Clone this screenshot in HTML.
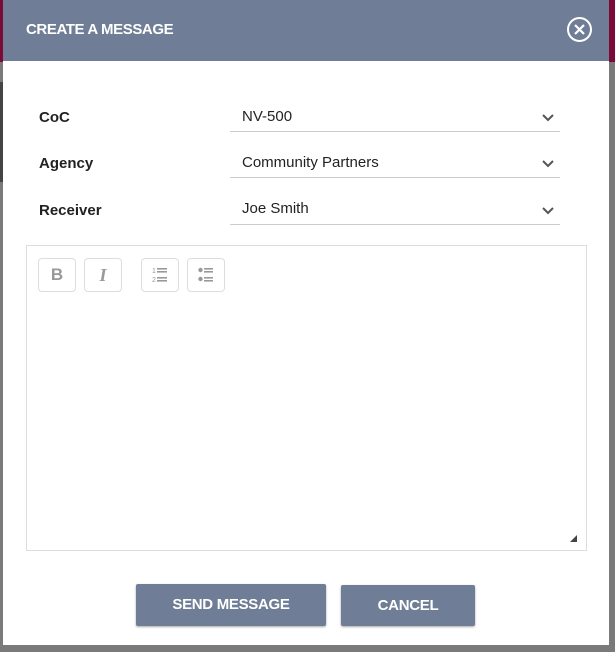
<!DOCTYPE html>
<html><head><style>
*{margin:0;padding:0;box-sizing:border-box}
body{width:615px;height:652px;background:#7a7a7a;position:relative;overflow:hidden;font-family:"Liberation Sans",Arial,sans-serif}
.a{position:absolute}
.hdr{left:0;top:0;width:615px;height:62px;background:#7b0b36}
.modal{left:3px;top:0;width:606px;height:645px;background:#fff}
.head{left:3px;top:0;width:606px;height:61px;background:#6f7e96}
.title{left:26px;top:21px;color:#fff;font-weight:bold;font-size:15px;letter-spacing:-.4px}
.lbl{left:39px;font-size:15px;font-weight:bold;color:#222}
.val{left:242px;font-size:15px;color:#222}
.line{left:230px;width:330px;height:1px;background:#ccc}
.tb{width:38px;height:34px;border:1px solid #ddd;border-radius:4px;top:258px;color:#999;text-align:center}
.btn{background:#6f7e96;color:#fff;font-weight:bold;font-size:15px;text-align:center;box-shadow:0 1px 2px rgba(0,0,0,.35);border-radius:2px;letter-spacing:-.3px}
</style></head><body>
<div class="a hdr"></div>
<div class="a" style="left:0;top:82px;width:3px;height:100px;background:#444"></div>
<div class="a modal"></div>
<div class="a head"></div>
<div class="a title">CREATE A MESSAGE</div>
<svg class="a" style="left:566px;top:16px" width="27" height="27" viewBox="0 0 27 27"><circle cx="13.5" cy="13.5" r="11.5" fill="none" stroke="#fff" stroke-width="2"/><path d="M9 9L18 18M18 9L9 18" stroke="#fff" stroke-width="2.2"/></svg>
<div class="a lbl" style="top:109px">CoC</div>
<div class="a val" style="top:108px">NV-500</div>
<div class="a line" style="top:131px"></div>
<div class="a lbl" style="top:155px">Agency</div>
<div class="a val" style="top:154px">Community Partners</div>
<div class="a line" style="top:177px"></div>
<div class="a lbl" style="top:202px">Receiver</div>
<div class="a val" style="top:200px">Joe Smith</div>
<div class="a line" style="top:224px"></div>
<svg class="a" style="left:541px;top:113px" width="14" height="110" viewBox="0 0 14 110"><g fill="none" stroke="#555" stroke-width="2"><path d="M2 2L7 7L12 2"/><path d="M2 48L7 53L12 48"/><path d="M2 95L7 100L12 95"/></g></svg>
<div class="a" style="left:26px;top:245px;width:561px;height:306px;border:1px solid #ddd"></div>
<div class="a tb" style="left:38px;font-weight:bold;font-size:17px;line-height:32px">B</div>
<div class="a tb" style="left:84px;font-style:italic;font-family:'Liberation Serif',serif;font-weight:bold;font-size:18px;line-height:32px">I</div>
<div class="a tb" style="left:141px"><svg width="36" height="32" viewBox="0 0 36 32"><g fill="#999"><rect x="15" y="9" width="10" height="1.6"/><rect x="15" y="12" width="10" height="1.6"/><rect x="15" y="18" width="10" height="1.6"/><rect x="15" y="21" width="10" height="1.6"/></g><text x="10" y="14" font-size="7" fill="#999">1</text><text x="10" y="23" font-size="7" fill="#999">2</text></svg></div>
<div class="a tb" style="left:187px"><svg width="36" height="32" viewBox="0 0 36 32"><g fill="#999"><circle cx="12.5" cy="11" r="2.2"/><circle cx="12.5" cy="20" r="2.2"/><rect x="16" y="9" width="9" height="1.6"/><rect x="16" y="12" width="9" height="1.6"/><rect x="16" y="18" width="9" height="1.6"/><rect x="16" y="21" width="9" height="1.6"/></g></svg></div>
<svg class="a" style="left:570px;top:535px" width="7" height="7"><path d="M7 0L7 7L0 7Z" fill="#444"/></svg>
<div class="a btn" style="left:136px;top:584px;width:190px;height:42px;line-height:42px">SEND MESSAGE</div>
<div class="a btn" style="left:341px;top:585px;width:134px;height:41px;line-height:41px">CANCEL</div>
</body></html>
